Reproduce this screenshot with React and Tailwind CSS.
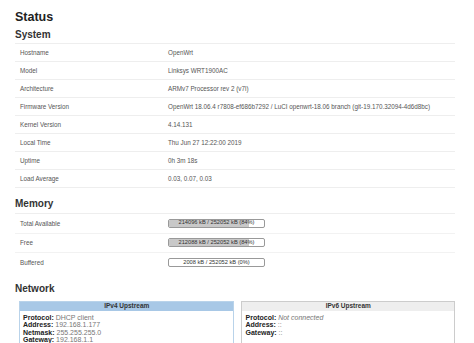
import React from 'react';

const systemRows = [
  ['Hostname', 'OpenWrt'],
  ['Model', 'Linksys WRT1900AC'],
  ['Architecture', 'ARMv7 Processor rev 2 (v7l)'],
  ['Firmware Version', 'OpenWrt 18.06.4 r7808-ef686b7292 / LuCI openwrt-18.06 branch (git-19.170.32094-4d6d8bc)'],
  ['Kernel Version', '4.14.131'],
  ['Local Time', 'Thu Jun 27 12:22:00 2019'],
  ['Uptime', '0h 3m 18s'],
  ['Load Average', '0.03, 0.07, 0.03'],
];

const memoryRows = [
  { label: 'Total Available', text: '214096 kB / 252052 kB (84%)', pct: 84 },
  { label: 'Free', text: '212088 kB / 252052 kB (84%)', pct: 84 },
  { label: 'Buffered', text: '2008 kB / 252052 kB (0%)', pct: 0 },
];

const Bar = ({ text, pct }) => (
  <div className="relative w-[97px] h-[9px] border border-[#999] rounded-[2px] bg-white overflow-hidden">
    <div className="h-full bg-[#c8c8c8]" style={{ width: `${pct}%` }} />
    <div className="absolute inset-0 flex items-center justify-center text-[5.7px] leading-none text-[#333]">
      {text}
    </div>
  </div>
);

const Field = ({ label, children }) => (
  <div className="leading-[7.5px]">
    <span className="font-bold text-[#222]">{label}:</span>{' '}
    <span className="text-[#777]">{children}</span>
  </div>
);

export default function App() {
  return (
    <div className="w-[474px] h-[343px] overflow-hidden bg-white pl-[15px] pr-[19px] pt-[9px] text-[#333]" style={{ fontFamily: '"Liberation Sans", Arial, sans-serif' }}>
      <h1 className="text-[12.5px] font-bold leading-[16px] text-[#222]">Status</h1>
      <h2 className="mt-[3px] text-[10px] font-bold leading-[13px] text-[#333]">System</h2>

      <div className="mt-[2px] border-t border-[#eee]">
        {systemRows.map(([k, v]) => (
          <div key={k} className="flex items-center h-[18px] border-b border-[#eee] text-[6.3px] text-[#555]">
            <div className="w-[153px] pl-[5px]">{k}</div>
            <div>{v}</div>
          </div>
        ))}
      </div>

      <h2 className="mt-[9px] text-[10px] font-bold leading-[13px] text-[#333]">Memory</h2>
      <div className="mt-[3px] border-t border-[#eee]">
        {memoryRows.map((r) => (
          <div key={r.label} className="flex items-center h-[19.5px] border-b border-[#f2f2f2] last:border-b-0 text-[6.3px] text-[#555]">
            <div className="w-[153px] pl-[5px]">{r.label}</div>
            <Bar text={r.text} pct={r.pct} />
          </div>
        ))}
      </div>

      <h2 className="mt-[9px] text-[10px] font-bold leading-[13px] text-[#333]">Network</h2>
      <div className="mt-[6px] ml-[4px] flex gap-[7px] text-[7px]">
        <div className="w-[219px] h-[60px] border border-[#b9d3ea]">
          <div className="h-[9px] bg-[#a8c8e6] flex items-center justify-center font-bold text-[6.5px] text-[#333]">IPv4 Upstream</div>
          <div className="px-[3px] pt-[3px]">
            <Field label="Protocol">DHCP client</Field>
            <Field label="Address">192.168.1.177</Field>
            <Field label="Netmask">255.255.255.0</Field>
            <Field label="Gateway">192.168.1.1</Field>
          </div>
        </div>
        <div className="w-[217px] h-[60px] border border-[#ccc]">
          <div className="h-[9px] bg-[#eee] flex items-center justify-center font-bold text-[6.5px] text-[#333]">IPv6 Upstream</div>
          <div className="px-[3px] pt-[3px]">
            <Field label="Protocol"><i>Not connected</i></Field>
            <Field label="Address">::</Field>
            <Field label="Gateway">::</Field>
          </div>
        </div>
      </div>
    </div>
  );
}
